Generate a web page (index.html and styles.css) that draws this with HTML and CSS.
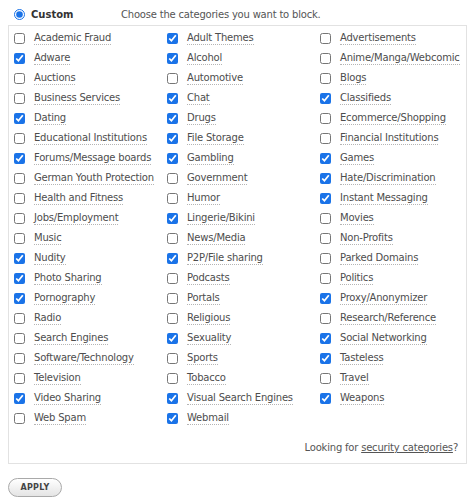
FILE: index.html
```html
<!DOCTYPE html>
<html>
<head>
<meta charset="utf-8">
<link rel="stylesheet" href="styles.css">
</head>
<body>
<div class="page">
  <div class="header">
    <label class="mode"><input type="radio" class="radio" checked><span class="mode-label">Custom</span></label>
    <span class="hint">Choose the categories you want to block.</span>
  </div>
  <div class="box">
    <div class="cols">
      <div class="col">
        <label class="item"><input type="checkbox"><span>Academic Fraud</span></label>
        <label class="item"><input type="checkbox" checked><span>Adware</span></label>
        <label class="item"><input type="checkbox"><span>Auctions</span></label>
        <label class="item"><input type="checkbox"><span>Business Services</span></label>
        <label class="item"><input type="checkbox" checked><span>Dating</span></label>
        <label class="item"><input type="checkbox"><span>Educational Institutions</span></label>
        <label class="item"><input type="checkbox" checked><span>Forums/Message boards</span></label>
        <label class="item"><input type="checkbox"><span>German Youth Protection</span></label>
        <label class="item"><input type="checkbox"><span>Health and Fitness</span></label>
        <label class="item"><input type="checkbox"><span>Jobs/Employment</span></label>
        <label class="item"><input type="checkbox"><span>Music</span></label>
        <label class="item"><input type="checkbox" checked><span>Nudity</span></label>
        <label class="item"><input type="checkbox" checked><span>Photo Sharing</span></label>
        <label class="item"><input type="checkbox" checked><span>Pornography</span></label>
        <label class="item"><input type="checkbox"><span>Radio</span></label>
        <label class="item"><input type="checkbox"><span>Search Engines</span></label>
        <label class="item"><input type="checkbox"><span>Software/Technology</span></label>
        <label class="item"><input type="checkbox"><span>Television</span></label>
        <label class="item"><input type="checkbox" checked><span>Video Sharing</span></label>
        <label class="item"><input type="checkbox"><span>Web Spam</span></label>
      </div>
      <div class="col">
        <label class="item"><input type="checkbox" checked><span>Adult Themes</span></label>
        <label class="item"><input type="checkbox" checked><span>Alcohol</span></label>
        <label class="item"><input type="checkbox"><span>Automotive</span></label>
        <label class="item"><input type="checkbox" checked><span>Chat</span></label>
        <label class="item"><input type="checkbox" checked><span>Drugs</span></label>
        <label class="item"><input type="checkbox" checked><span>File Storage</span></label>
        <label class="item"><input type="checkbox" checked><span>Gambling</span></label>
        <label class="item"><input type="checkbox"><span>Government</span></label>
        <label class="item"><input type="checkbox"><span>Humor</span></label>
        <label class="item"><input type="checkbox" checked><span>Lingerie/Bikini</span></label>
        <label class="item"><input type="checkbox"><span>News/Media</span></label>
        <label class="item"><input type="checkbox" checked><span>P2P/File sharing</span></label>
        <label class="item"><input type="checkbox"><span>Podcasts</span></label>
        <label class="item"><input type="checkbox"><span>Portals</span></label>
        <label class="item"><input type="checkbox"><span>Religious</span></label>
        <label class="item"><input type="checkbox" checked><span>Sexuality</span></label>
        <label class="item"><input type="checkbox"><span>Sports</span></label>
        <label class="item"><input type="checkbox"><span>Tobacco</span></label>
        <label class="item"><input type="checkbox" checked><span>Visual Search Engines</span></label>
        <label class="item"><input type="checkbox" checked><span>Webmail</span></label>
      </div>
      <div class="col">
        <label class="item"><input type="checkbox"><span>Advertisements</span></label>
        <label class="item"><input type="checkbox"><span>Anime/Manga/Webcomic</span></label>
        <label class="item"><input type="checkbox"><span>Blogs</span></label>
        <label class="item"><input type="checkbox" checked><span>Classifieds</span></label>
        <label class="item"><input type="checkbox"><span>Ecommerce/Shopping</span></label>
        <label class="item"><input type="checkbox"><span>Financial Institutions</span></label>
        <label class="item"><input type="checkbox" checked><span>Games</span></label>
        <label class="item"><input type="checkbox" checked><span>Hate/Discrimination</span></label>
        <label class="item"><input type="checkbox" checked><span>Instant Messaging</span></label>
        <label class="item"><input type="checkbox"><span>Movies</span></label>
        <label class="item"><input type="checkbox"><span>Non-Profits</span></label>
        <label class="item"><input type="checkbox"><span>Parked Domains</span></label>
        <label class="item"><input type="checkbox"><span>Politics</span></label>
        <label class="item"><input type="checkbox" checked><span>Proxy/Anonymizer</span></label>
        <label class="item"><input type="checkbox"><span>Research/Reference</span></label>
        <label class="item"><input type="checkbox" checked><span>Social Networking</span></label>
        <label class="item"><input type="checkbox" checked><span>Tasteless</span></label>
        <label class="item"><input type="checkbox"><span>Travel</span></label>
        <label class="item"><input type="checkbox" checked><span>Weapons</span></label>
      </div>
    </div>
    <div class="footer">Looking for <a href="#" class="link">security categories</a>?</div>
  </div>
  <button class="apply">APPLY</button>
</div>
</body>
</html>
```
FILE: styles.css
```css
html, body {
  margin: 0;
  padding: 0;
  background: #fff;
}
.page {
  padding: 4px 7px 0 8px;
  font-family: "DejaVu Sans", Verdana, sans-serif;
  font-size: 10px;
  letter-spacing: -0.2px;
  color: #4d4d4d;
}
.header {
  display: flex;
  align-items: center;
  height: 20px;
}
.mode {
  display: flex;
  align-items: center;
  width: 113px;
}
.radio {
  margin: 0 6px 0 6px;
  width: 11px;
  height: 11px;
  accent-color: #1a73e8;
}
.mode-label {
  font-weight: bold;
  color: #333;
  letter-spacing: 0;
}
.hint {
  color: #555;
}
.box {
  margin-top: 1px;
  border: 1px solid #e2e2e2;
  padding: 2px 0 8px 5px;
}
.cols {
  display: grid;
  grid-template-columns: 153px 153px 1fr;
}
.col {
  display: flex;
  flex-direction: column;
}
.item {
  display: flex;
  align-items: center;
  height: 20px;
}
.item input {
  margin: 0 9px 0 0;
  width: 11px;
  height: 11px;
  accent-color: #1a73e8;
}
.item span {
  border-bottom: 1px dotted #b5b5b5;
  line-height: 13px;
}
.footer {
  margin-top: 13px;
  text-align: right;
  padding-right: 8px;
  line-height: 14px;
  color: #555;
}
.link {
  color: #555;
  text-decoration: underline;
}
.apply {
  margin-top: 14px;
  width: 54px;
  height: 19px;
  border: 1px solid #a9a9a9;
  border-radius: 10px;
  background: linear-gradient(#ffffff, #e4e4e4);
  font-family: "DejaVu Sans", Verdana, sans-serif;
  font-size: 8px;
  font-weight: bold;
  color: #444;
  padding: 0;
  letter-spacing: 0.3px;
}
```
